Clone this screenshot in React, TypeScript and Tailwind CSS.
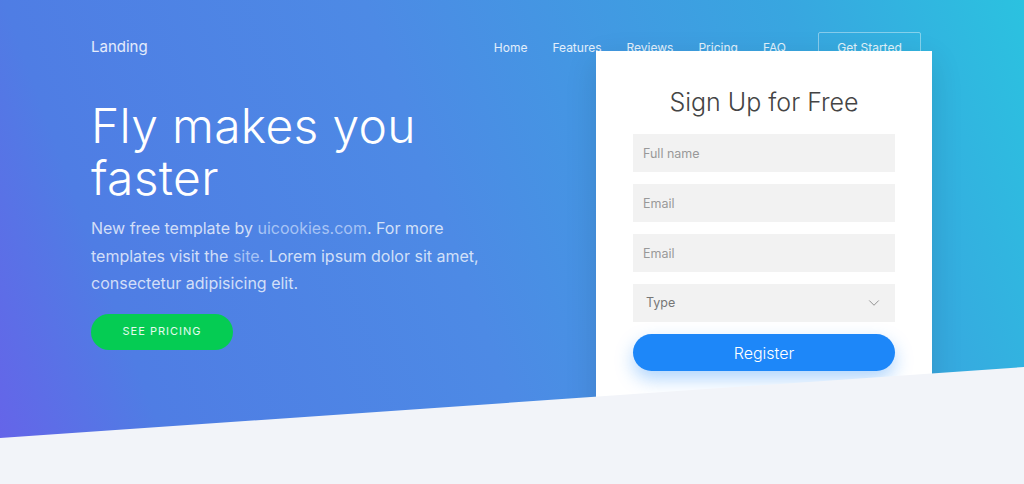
import { ChevronDown } from 'lucide-react'

const navLinks = ['Home', 'Features', 'Reviews', 'Pricing', 'FAQ']

const fields = ['Full name', 'Email', 'Email']

export default function App() {
  return (
    <div
      className="relative h-[484px] w-full overflow-hidden bg-[linear-gradient(70deg,#6762e9_0%,#4f7de4_15%,#4d8ae5_45%,#38a6e0_80%,#2bc2e0_100%)]"
      style={{ fontFamily: 'Inter, "Noto Sans", sans-serif' }}
    >
      {/* Top bar */}
      <nav className="flex items-center pl-[91px] pr-[103px] pt-[32px]">
        <a className="text-[15px] font-normal text-white/85">Landing</a>
        <div className="ml-auto flex items-center">
          {navLinks.map((l) => (
            <a key={l} className="mr-[25px] text-[12px] text-white/85">
              {l}
            </a>
          ))}
          <button className="ml-[7px] h-[31px] w-[103px] rounded-[2px] border border-white/40 text-[12px] text-white/85">
            Get Started
          </button>
        </div>
      </nav>

      {/* Hero */}
      <div className="-mt-[12px] flex items-start pl-[91px] pr-[92px]">
        <div className="w-[410px] pt-[49px]">
          <h1 className="text-[48px] font-light leading-[52px] tracking-[0.3px] text-white">
            Fly makes you faster
          </h1>
          <p className="mt-[11px] w-[400px] text-[16px] font-normal leading-[27.5px] text-white/75">
            New free template by <span className="text-[#a7c3f5]">uicookies.com</span>. For more templates visit the{' '}
            <span className="text-[#a7c3f5]">site</span>. Lorem ipsum dolor sit amet, consectetur adipisicing elit.
          </p>
          <button className="mt-[16px] h-[36px] w-[142px] rounded-full bg-[#05cc53] text-[11px] tracking-[1px] text-white/90">
            SEE PRICING
          </button>
        </div>

        <div className="relative z-10 ml-auto w-[336px] bg-white px-[37px] pb-[40px] pt-[37px] shadow-[0_10px_30px_rgba(0,0,0,0.12)]">
          <h2 className="text-center text-[25px] font-light leading-[28px] text-[#444]">Sign Up for Free</h2>
          <form className="mt-[18px] flex flex-col gap-[12px]">
            {fields.map((f, i) => (
              <input
                key={i}
                placeholder={f}
                className="h-[38px] w-full bg-[#f2f2f2] px-[10px] text-[12.5px] text-[#555] outline-none placeholder:text-[#999]"
              />
            ))}
            <div className="flex h-[38px] w-full items-center justify-between bg-[#f2f2f2] pl-[13px] pr-[12px] text-[12.5px] text-[#777]">
              <span>Type</span>
              <ChevronDown size={18} strokeWidth={1.2} className="text-[#888]" />
            </div>
            <button
              type="button"
              className="h-[37px] w-full rounded-full bg-[#1d87f9] text-[16px] font-light text-white shadow-[0_8px_18px_rgba(29,135,249,0.35)]"
            >
              Register
            </button>
          </form>
        </div>
      </div>

      {/* Slanted bottom */}
      <svg
        className="absolute bottom-0 left-0 z-20 h-[117px] w-full"
        viewBox="0 0 1024 117"
        preserveAspectRatio="none"
      >
        <polygon points="0,71 1024,0 1024,117 0,117" fill="#f2f4f9" />
      </svg>
    </div>
  )
}
